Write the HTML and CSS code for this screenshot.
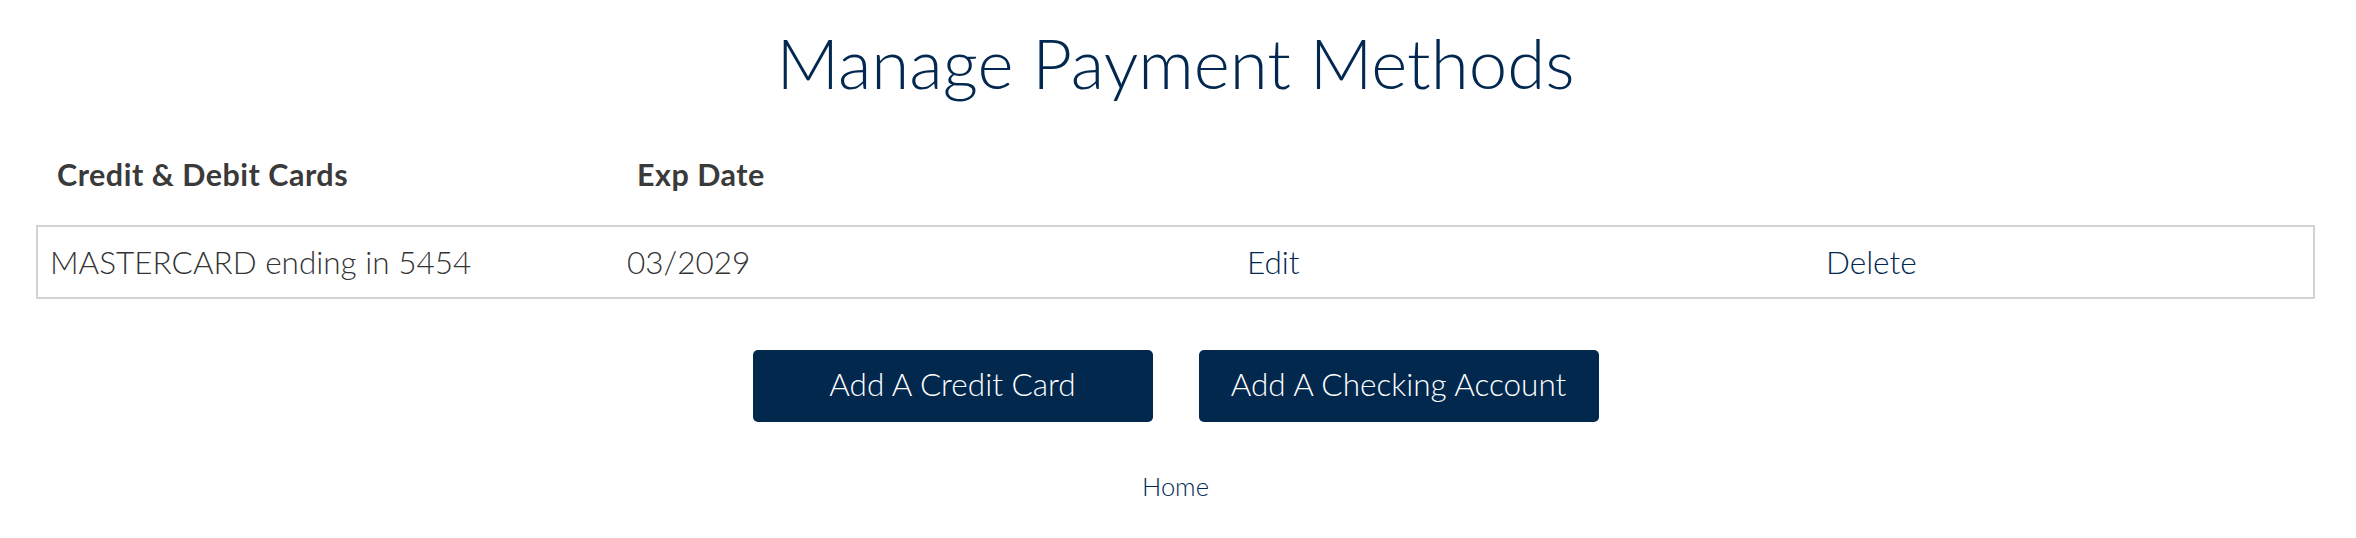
FILE: index.html
```html
<!DOCTYPE html>
<html lang="en">
<head>
<meta charset="utf-8">
<title>Manage Payment Methods</title>
<link rel="stylesheet" href="styles.css">
</head>
<body>
<main class="page">
  <h1 class="title">Manage Payment Methods</h1>
  <div class="head-row">
    <div class="head-cell">Credit &amp; Debit Cards</div>
    <div class="head-cell">Exp Date</div>
  </div>
  <div class="card-row">
    <div class="cell">MASTERCARD ending in 5454</div>
    <div class="cell">03/2029</div>
    <div class="cell"><a class="link" href="#">Edit</a></div>
    <div class="cell"><a class="link" href="#">Delete</a></div>
  </div>
  <div class="actions">
    <a class="btn" href="#">Add A Credit Card</a>
    <a class="btn" href="#">Add A Checking Account</a>
  </div>
  <div class="home"><a class="link" href="#">Home</a></div>
</main>
</body>
</html>
```
FILE: styles.css
```css
html, body {
  margin: 0;
  padding: 0;
  background: #ffffff;
}
body {
  font-family: Lato, "Open Sans", "Liberation Sans", sans-serif;
  color: #333333;
}
.page {
  margin: 0 41px 0 36px;
  padding-top: 21px;
}
.title {
  margin: 0;
  font-size: 69px;
  line-height: 84px;
  font-weight: 300;
  color: #022850;
  text-align: center;
}
.head-row {
  display: grid;
  grid-template-columns: 580px 1fr;
  margin-top: 49px;
}
.head-cell {
  padding-left: 21px;
  font-size: 30.5px;
  line-height: 40px;
  font-weight: 700;
  letter-spacing: 0.5px;
  color: #3a3a3a;
}
.card-row {
  display: grid;
  grid-template-columns: 577px 620px 579px 1fr;
  margin-top: 31px;
  border: 2px solid #d3d3d3;
}
.cell {
  padding: 0 12px;
  font-size: 31.5px;
  line-height: 70px;
  font-weight: 300;
  color: #333333;
}
.link {
  color: #022850;
  text-decoration: none;
}
.actions {
  display: flex;
  justify-content: center;
  gap: 46px;
  margin-top: 51px;
}
.btn {
  display: block;
  width: 400px;
  height: 69px;
  padding-bottom: 3px;
  border-radius: 5px;
  background: #02284e;
  color: #ffffff;
  text-decoration: none;
  text-align: center;
  font-size: 31.5px;
  line-height: 69px;
  font-weight: 300;
}
.home {
  margin-top: 46px;
  text-align: center;
  font-size: 25.5px;
  line-height: 36px;
  font-weight: 300;
}
```
